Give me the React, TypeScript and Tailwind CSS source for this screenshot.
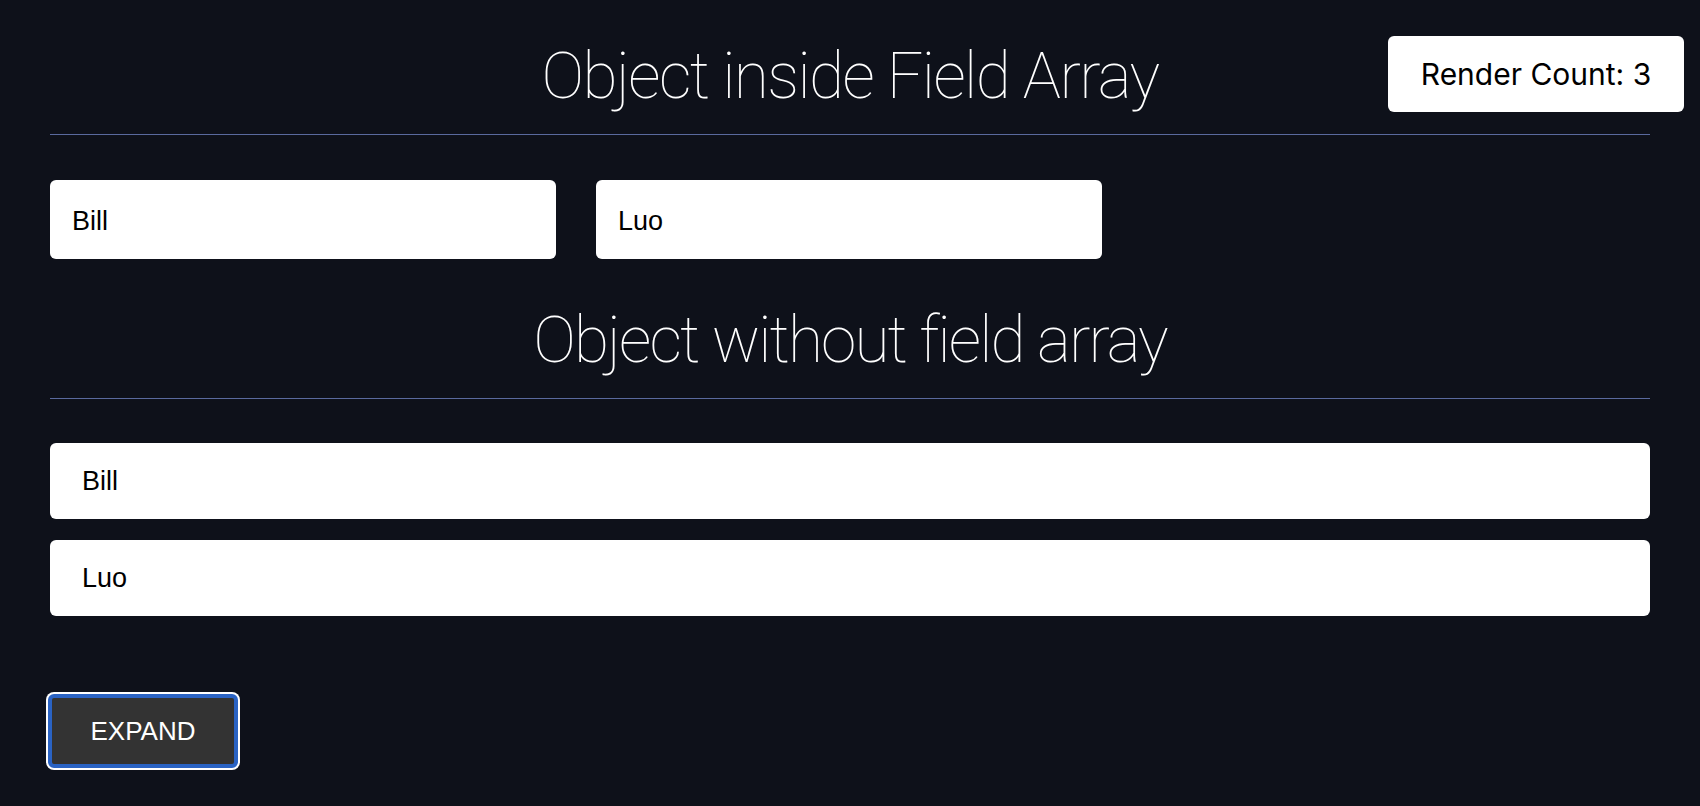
import { useState } from 'react'

const FIELD_ARRAY = [
  { key: 'firstName', value: 'Bill' },
  { key: 'lastName', value: 'Luo' },
]

const headingFont = { fontFamily: 'Roboto, "Helvetica Neue", sans-serif' }

export default function App() {
  const [renderCount] = useState(3)

  return (
    <div className="relative min-h-screen w-full bg-[#0e111a] font-['Liberation_Sans',Arial,sans-serif]">
      <div className="absolute top-[36px] right-[16px] flex h-[76px] w-[296px] items-center justify-center rounded-md bg-white font-['Inter',sans-serif] text-[30px] text-black">
        Render Count: {renderCount}
      </div>

      <div className="flex flex-col px-[50px] pt-[37px]">
        <h1 className="text-center text-[64px] leading-[80px] font-thin tracking-[-1.6px] text-white" style={headingFont}>
          Object inside Field Array
        </h1>
        <div className="mt-[17px] h-px w-full bg-[#5a6a9e]" />

        <div className="mt-[45px] flex gap-[40px]">
          {FIELD_ARRAY.map((f) => (
            <input key={f.key} defaultValue={f.value}
              className="h-[79px] w-[506px] rounded-md bg-white px-[22px] pt-[3px] text-[27px] text-black outline-none" />
          ))}
        </div>

        <h1 className="mt-[42px] text-center text-[64px] leading-[80px] font-thin tracking-[-1.9px] text-white" style={headingFont}>
          Object without field array
        </h1>
        <div className="mt-[17px] h-px w-full bg-[#5a6a9e]" />

        <div className="mt-[44px] flex flex-col gap-[21px]">
          {FIELD_ARRAY.map((f) => (
            <input key={f.key} defaultValue={f.value}
              className="h-[76px] w-full rounded-md bg-white px-[32px] text-[27px] text-black outline-none" />
          ))}
        </div>

        <div className="mt-[78px] -ml-[2px]">
          <button className="h-[74px] w-[190px] rounded-md border-[4px] border-[#2a63c4] bg-[#333333] text-[26px] text-white shadow-[0_0_0_2px_#ffffff]">
            EXPAND
          </button>
        </div>
      </div>
    </div>
  )
}
